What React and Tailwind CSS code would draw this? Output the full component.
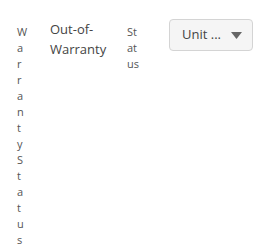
export default function App() {
  return (
    <div className="w-[262px] h-[250px] bg-white overflow-hidden text-[#444]" style={{ fontFamily: '"Open Sans", "Noto Sans", sans-serif' }}>
      <div className="flex items-start">
        {/* col 1 */}
        <div className="ml-[17px] mt-[24px] w-[6px] text-[11px] leading-4 break-all text-[#555]">WarrantyStatus</div>

        {/* col 2 */}
        <div className="ml-[27px] mt-[19px] w-[72px] text-[13px] leading-5">Out-of-Warranty</div>

        {/* col 3 */}
        <div className="ml-[5px] mt-[24px] w-[14px] text-[11px] leading-4 break-all text-[#555]">Status</div>

        {/* dropdown */}
        <button className="ml-[28px] mt-[19px] w-[84px] h-[32px] flex items-center justify-between pl-[12px] pr-[10px] rounded-[4px] border border-[#d4d4d4] bg-[#f5f5f5] text-[13px] text-[#444]">
          <span>Unit ...</span>
          <svg width="11" height="7" viewBox="0 0 11 7" className="mt-[1px]">
            <path d="M0 0 L11 0 L5.5 7 Z" fill="#666" />
          </svg>
        </button>
      </div>
    </div>
  );
}
